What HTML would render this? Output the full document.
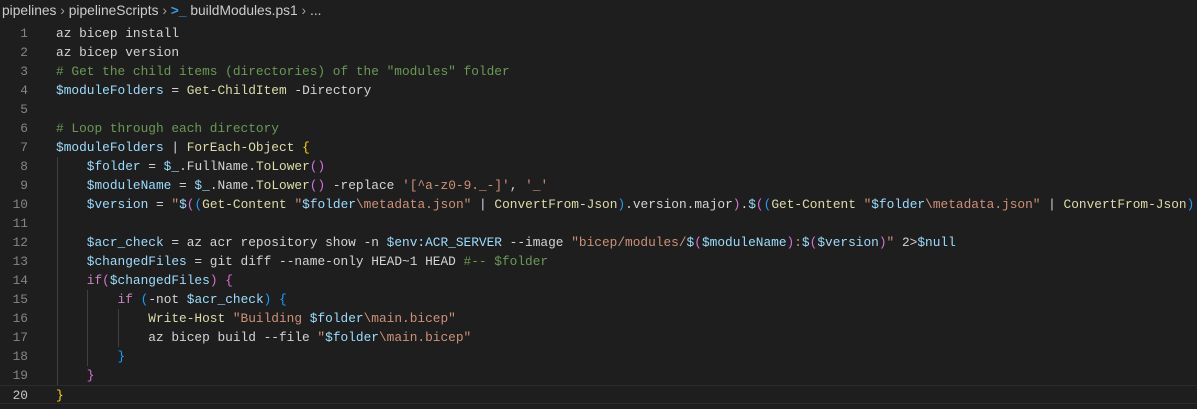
<!DOCTYPE html>
<html><head><meta charset="utf-8"><style>
body{margin:0;background:#1e1e1e;width:1197px;height:409px;overflow:hidden;font-family:"Liberation Mono",monospace;}
.bc{position:absolute;top:0;left:0;height:24px;line-height:22px;font-family:"Liberation Sans",sans-serif;font-size:13.8px;color:#cccccc;padding-left:2px;white-space:pre;}
.bc .s{color:#a0a0a0}
.ed{position:absolute;top:23.5px;left:0;width:1197px;}
.l{position:relative;height:19.05px;line-height:19.05px;font-size:12.82px;white-space:pre;color:#d4d4d4;}
.n{position:absolute;left:0;width:28px;text-align:right;color:#858585;}
.c{position:absolute;left:56px;}
.cur{border-top:1px solid #2c2c2c;border-bottom:1px solid #2c2c2c;box-sizing:border-box;}
.cur .n{color:#c6c6c6}
.g{position:absolute;top:0;width:1px;height:100%;background:#404040;}
.v{color:#9cdcfe}.f{color:#dcdcaa}.m{color:#6a9955}.s{color:#ce9178}.k{color:#c586c0}
.y{color:#ffd700}.p{color:#da70d6}.b{color:#179fff}.w{color:#d4d4d4}
</style></head><body>
<div class="bc">pipelines <span class="s">›</span> pipelineScripts <span class="s">›</span> <span style="color:#3a96dd;font-weight:bold">&gt;_</span> buildModules.ps1 <span class="s">›</span> ...</div>
<div class="ed">
<div class="l"><span class="n">1</span><span class="c">az bicep install</span></div>
<div class="l"><span class="n">2</span><span class="c">az bicep version</span></div>
<div class="l"><span class="n">3</span><span class="c m"># Get the child items (directories) of the "modules" folder</span></div>
<div class="l"><span class="n">4</span><span class="c"><span class="v">$moduleFolders</span> = <span class="f">Get-ChildItem</span> -Directory</span></div>
<div class="l"><span class="n">5</span></div>
<div class="l"><span class="n">6</span><span class="c m"># Loop through each directory</span></div>
<div class="l"><span class="n">7</span><span class="c"><span class="v">$moduleFolders</span> | <span class="f">ForEach-Object</span> <span class="y">{</span></span></div>
<div class="l"><span class="n">8</span><span class="g" style="left:57px"></span><span class="c">    <span class="v">$folder</span> = <span class="v">$_</span>.FullName.<span class="f">ToLower</span><span class="p">()</span></span></div>
<div class="l"><span class="n">9</span><span class="g" style="left:57px"></span><span class="c">    <span class="v">$moduleName</span> = <span class="v">$_</span>.Name.<span class="f">ToLower</span><span class="p">()</span> -replace <span class="s">'[^a-z0-9._-]'</span>, <span class="s">'_'</span></span></div>
<div class="l"><span class="n">10</span><span class="g" style="left:57px"></span><span class="c">    <span class="v">$version</span> = <span class="s">"</span><span class="v">$</span><span class="p">(</span><span class="b">(</span><span class="f">Get-Content</span> <span class="s">"</span><span class="v">$folder</span><span class="s">\metadata.json"</span> | <span class="f">ConvertFrom-Json</span><span class="b">)</span>.version.major<span class="p">)</span>.<span class="v">$</span><span class="p">(</span><span class="b">(</span><span class="f">Get-Content</span> <span class="s">"</span><span class="v">$folder</span><span class="s">\metadata.json"</span> | <span class="f">ConvertFrom-Json</span><span class="b">)</span></span></div>
<div class="l"><span class="n">11</span><span class="g" style="left:57px"></span></div>
<div class="l"><span class="n">12</span><span class="g" style="left:57px"></span><span class="c">    <span class="v">$acr_check</span> = az acr repository show -n <span class="v">$env:ACR_SERVER</span> --image <span class="s">"bicep/modules/</span><span class="v">$</span><span class="p">(</span><span class="v">$moduleName</span><span class="p">)</span><span class="s">:</span><span class="v">$</span><span class="p">(</span><span class="v">$version</span><span class="p">)</span><span class="s">"</span> 2&gt;<span class="v">$null</span></span></div>
<div class="l"><span class="n">13</span><span class="g" style="left:57px"></span><span class="c">    <span class="v">$changedFiles</span> = git diff --name-only HEAD~1 HEAD <span class="m">#-- $folder</span></span></div>
<div class="l"><span class="n">14</span><span class="g" style="left:57px"></span><span class="c">    <span class="k">if</span><span class="p">(</span><span class="v">$changedFiles</span><span class="p">)</span> <span class="p">{</span></span></div>
<div class="l"><span class="n">15</span><span class="g" style="left:57px"></span><span class="g" style="left:87px"></span><span class="c">        <span class="k">if</span> <span class="b">(</span>-not <span class="v">$acr_check</span><span class="b">)</span> <span class="b">{</span></span></div>
<div class="l"><span class="n">16</span><span class="g" style="left:57px"></span><span class="g" style="left:87px"></span><span class="g" style="left:118px"></span><span class="c">            <span class="f">Write-Host</span> <span class="s">"Building </span><span class="v">$folder</span><span class="s">\main.bicep"</span></span></div>
<div class="l"><span class="n">17</span><span class="g" style="left:57px"></span><span class="g" style="left:87px"></span><span class="g" style="left:118px"></span><span class="c">            az bicep build --file <span class="s">"</span><span class="v">$folder</span><span class="s">\main.bicep"</span></span></div>
<div class="l"><span class="n">18</span><span class="g" style="left:57px"></span><span class="g" style="left:87px"></span><span class="c">        <span class="b">}</span></span></div>
<div class="l"><span class="n">19</span><span class="g" style="left:57px"></span><span class="c">    <span class="p">}</span></span></div>
<div class="l cur"><span class="n">20</span><span class="c"><span class="y">}</span></span></div>
</div>
</body></html>
